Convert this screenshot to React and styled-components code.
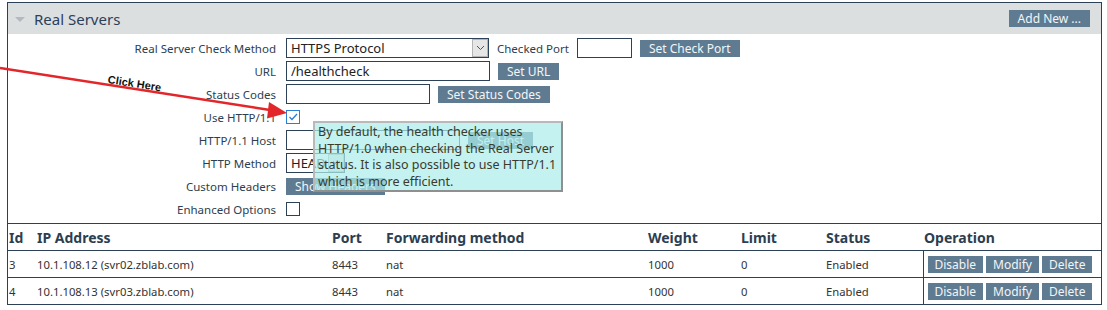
import styled, { createGlobalStyle } from "styled-components";

const GlobalStyle = createGlobalStyle`
  body {
    margin: 0;
    background: #fff;
    font-family: "Noto Sans", "DejaVu Sans", sans-serif;
    color: #333;
  }
`;

const servers = [
  { id: 3, ip: "10.1.108.12 (svr02.zblab.com)", port: 8443, method: "nat", weight: 1000, limit: 0, status: "Enabled" },
  { id: 4, ip: "10.1.108.13 (svr03.zblab.com)", port: 8443, method: "nat", weight: 1000, limit: 0, status: "Enabled" },
];

const columns = [
  { label: "Id", width: 28 },
  { label: "IP Address", width: 295 },
  { label: "Port", width: 54 },
  { label: "Forwarding method", width: 262 },
  { label: "Weight", width: 93 },
  { label: "Limit", width: 85 },
  { label: "Status", width: 98 },
  { label: "Operation", width: 178 },
];

function Chevron() {
  return (
    <svg width="9" height="6" viewBox="0 0 9 6">
      <path d="M1 1 L4.5 4.5 L8 1" fill="none" stroke="#555" strokeWidth="1" />
    </svg>
  );
}

function Check({ checked }) {
  return (
    <CheckBox checked={checked}>
      {checked && (
        <svg width="10" height="10" viewBox="0 0 10 10">
          <path d="M1.5 5 L4 7.5 L9 2" fill="none" stroke="#2a7fd4" strokeWidth="1.3" />
        </svg>
      )}
    </CheckBox>
  );
}

export default function App() {
  return (
    <Root>
      <GlobalStyle />
      <Panel>
        <Header>
          <Caret />
          <Title>Real Servers</Title>
          <Button>Add New ...</Button>
        </Header>

        <Form>
          <Label>Real Server Check Method</Label>
          <Controls>
            <Select width={203}>
              <span>HTTPS Protocol</span>
              <SelectArrow>
                <Chevron />
              </SelectArrow>
            </Select>
            <InlineLabel>Checked Port</InlineLabel>
            <Input width={55} />
            <Button>Set Check Port</Button>
          </Controls>

          <Label>URL</Label>
          <Controls>
            <Input width={204} value="/healthcheck" readOnly />
            <Button>Set URL</Button>
          </Controls>

          <Label>Status Codes</Label>
          <Controls>
            <Input width={144} />
            <Button>Set Status Codes</Button>
          </Controls>

          <Label>Use HTTP/1.1</Label>
          <Controls>
            <Check checked />
          </Controls>

          <Label>HTTP/1.1 Host</Label>
          <Controls>
            <Input width={174} />
            <Button>Set Host</Button>
          </Controls>

          <Label>HTTP Method</Label>
          <Controls>
            <Select width={59}>
              <span>HEAD</span>
              <SelectArrow>
                <Chevron />
              </SelectArrow>
            </Select>
          </Controls>

          <Label>Custom Headers</Label>
          <Controls>
            <Button>Show Headers</Button>
          </Controls>

          <Label>Enhanced Options</Label>
          <Controls>
            <Check />
          </Controls>
        </Form>

        <Table>
          <colgroup>
            {columns.map((c) => (
              <col key={c.label} style={{ width: c.width }} />
            ))}
          </colgroup>
          <thead>
            <tr>
              {columns.map((c) => (
                <Th key={c.label}>{c.label}</Th>
              ))}
            </tr>
          </thead>
          <tbody>
            {servers.map((s) => (
              <tr key={s.id}>
                <Td>{s.id}</Td>
                <Td>{s.ip}</Td>
                <Td>{s.port}</Td>
                <Td>{s.method}</Td>
                <Td>{s.weight}</Td>
                <Td>{s.limit}</Td>
                <Td>{s.status}</Td>
                <OpCell>
                  <Ops>
                    <Button compact>Disable</Button>
                    <Button compact>Modify</Button>
                    <Button compact>Delete</Button>
                  </Ops>
                </OpCell>
              </tr>
            ))}
          </tbody>
        </Table>
      </Panel>

      <Arrow width="300" height="130" viewBox="0 0 300 130">
        <line x1="0" y1="68" x2="270" y2="110" stroke="#e3262a" strokeWidth="2.5" />
        <polygon points="287,113 269,102 267,118.5" fill="#e3262a" />
      </Arrow>
      <ClickHere>Click Here</ClickHere>

      <Tooltip>
        By default, the health checker uses HTTP/1.0 when checking the Real Server
        status. It is also possible to use HTTP/1.1 which is more efficient.
      </Tooltip>
    </Root>
  );
}

//Styles
const Root = styled.div`
  position: relative;
  width: 1107px;
  height: 310px;
  overflow: hidden;
`;

const Panel = styled.div`
  margin: 2px 5px 0 7px;
  border: 1px solid #2c4058;
`;

const Header = styled.div`
  display: flex;
  align-items: center;
  height: 31px;
  padding: 0 11px 0 7px;
  background: #dcdfe0;
  box-sizing: border-box;

  & > button {
    margin-left: auto;
    margin-top: -1px;
  }
`;

const Caret = styled.span`
  width: 0;
  height: 0;
  border-left: 5px solid transparent;
  border-right: 5px solid transparent;
  border-top: 5px solid #b3b9be;
  margin-top: 1px;
`;

const Title = styled.span`
  margin-left: 9px;
  font-size: 15px;
  color: #2c4058;
`;

const Button = styled.button.withConfig({
  shouldForwardProp: (prop) => prop !== "compact",
})`
  height: 17px;
  padding: 0 ${({ compact }) => (compact ? 7 : 9)}px;
  border: none;
  background: #5f7b92;
  color: #f2f6f8;
  font-family: "Noto Sans", "DejaVu Sans", sans-serif;
  font-size: 12px;
  line-height: 17px;
  white-space: nowrap;
  cursor: pointer;
`;

const Form = styled.div`
  display: grid;
  grid-template-columns: 268px auto;
  grid-auto-rows: 20px;
  column-gap: 10px;
  row-gap: 3px;
  padding: 4px 0 4px;
`;

const Label = styled.div`
  text-align: right;
  font-size: 11.5px;
  line-height: 22px;
  color: #2c3e50;
  white-space: nowrap;
`;

const Controls = styled.div`
  display: flex;
  align-items: center;
  gap: 8px;
`;

const InlineLabel = styled.span`
  font-size: 11.5px;
  color: #2c3e50;
`;

const Input = styled.input`
  width: ${({ width }) => width}px;
  height: 20px;
  box-sizing: border-box;
  border: 1px solid #2c4058;
  padding: 0 4px;
  font-family: "Noto Sans", "DejaVu Sans", sans-serif;
  font-size: 13px;
  color: #222;
  outline: none;
`;

const Select = styled.div`
  display: flex;
  align-items: center;
  justify-content: space-between;
  width: ${({ width }) => width}px;
  height: 20px;
  box-sizing: border-box;
  border: 1px solid #2c4058;
  padding-left: 4px;
  font-size: 13px;
  color: #222;
`;

const SelectArrow = styled.span`
  display: flex;
  align-items: center;
  justify-content: center;
  width: 16px;
  height: 18px;
  box-sizing: border-box;
  border: 1px solid #b5b5b5;
  background: #e6e6e6;
`;

const CheckBox = styled.span`
  display: flex;
  align-items: center;
  justify-content: center;
  width: 12px;
  height: 12px;
  border: 1px solid ${({ checked }) => (checked ? "#2a7fd4" : "#2c4058")};
  background: #fff;
`;

const Table = styled.table`
  width: 100%;
  table-layout: fixed;
  border-collapse: collapse;
  border-top: 1px solid #2c4058;
`;

const Th = styled.th`
  height: 26px;
  padding: 0 0 0 1px;
  text-align: left;
  font-size: 14px;
  font-weight: bold;
  color: #2c3e50;
  border-bottom: 1px solid #2c4058;
  white-space: nowrap;
`;

const Td = styled.td`
  height: 26px;
  padding: 0 0 0 1px;
  font-size: 11.3px;
  color: #333;
  border-bottom: 1px solid #2c4058;
  white-space: nowrap;

  tr:last-child & {
    border-bottom: none;
  }
`;

const OpCell = styled(Td)`
  padding: 0 0 0 4px;
  border-left: 1px solid #2c4058;
`;

const Ops = styled.div`
  display: flex;
  gap: 3px;
`;

const Arrow = styled.svg`
  position: absolute;
  left: 0;
  top: 0;
  pointer-events: none;
`;

const ClickHere = styled.span`
  position: absolute;
  left: 108px;
  top: 73px;
  font-family: "Liberation Sans", Arial, sans-serif;
  font-size: 11px;
  font-weight: bold;
  color: #111;
  transform: rotate(9deg);
  transform-origin: left center;
`;

const Tooltip = styled.div`
  position: absolute;
  left: 313px;
  top: 121px;
  width: 250px;
  height: 71px;
  box-sizing: border-box;
  padding: 1px 4px 0 3px;
  border: 2px solid #b9b9b9;
  border-right-color: #8f8f8f;
  border-bottom-color: #8f8f8f;
  background: rgba(172, 237, 234, 0.72);
  font-size: 12.5px;
  line-height: 16.5px;
  color: #3b3a2c;
`;
